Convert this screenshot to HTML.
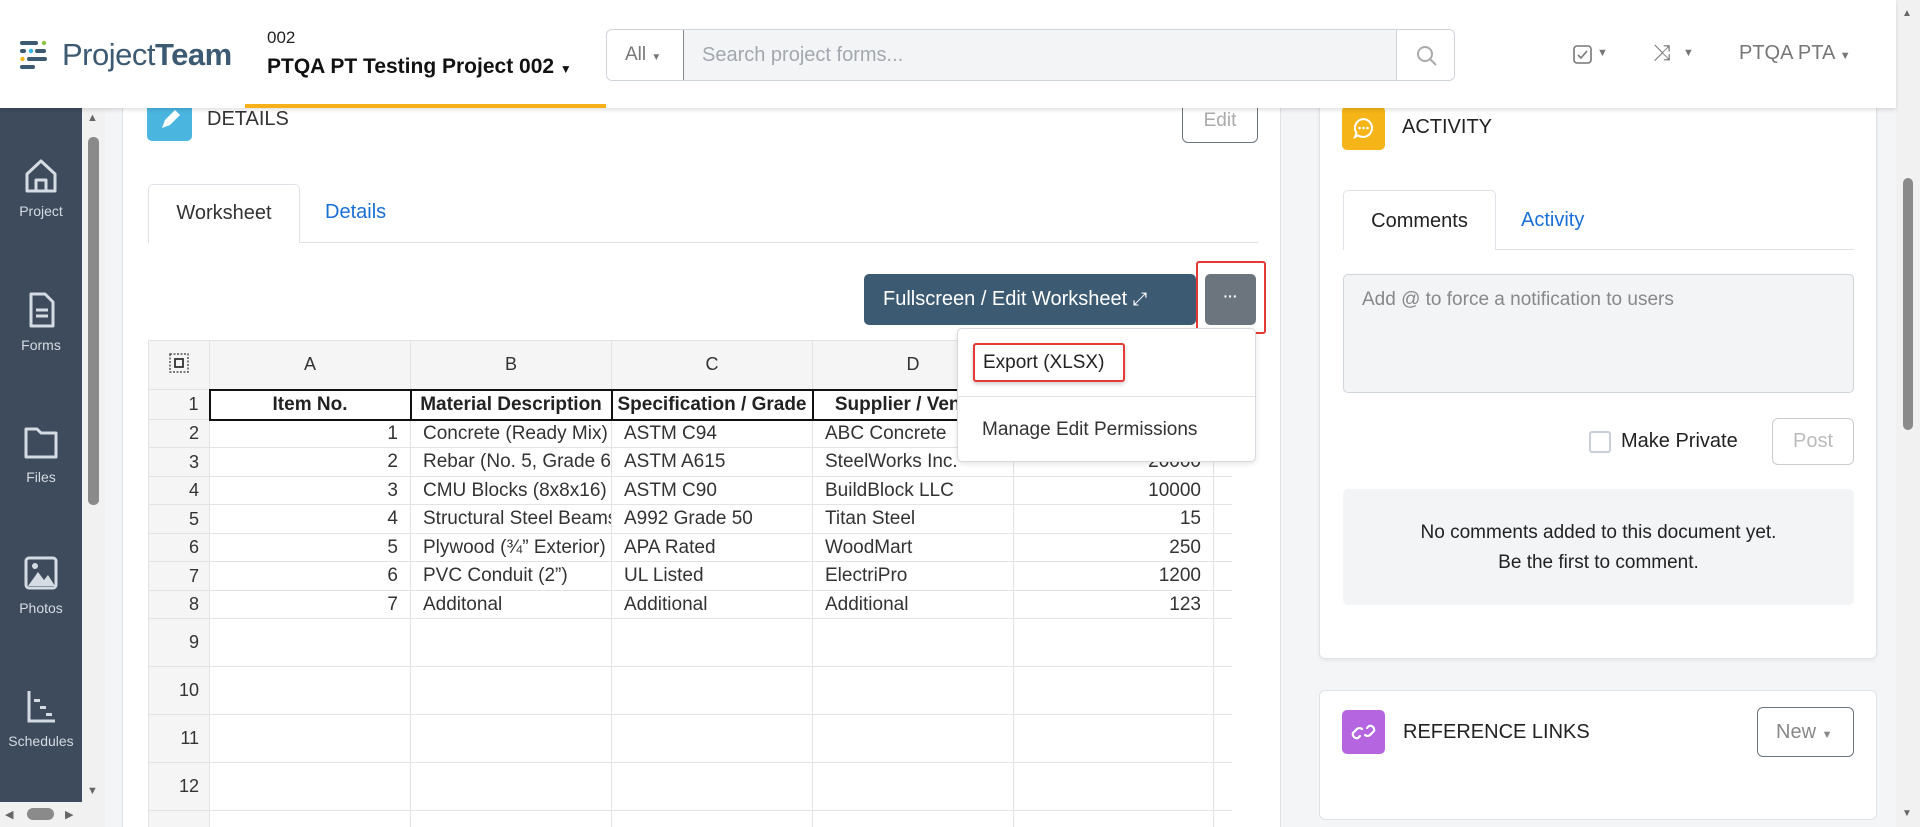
<!DOCTYPE html>
<html style="width:1920px;height:827px;overflow:hidden"><head><meta charset="utf-8"><style>
*{box-sizing:border-box;margin:0;padding:0}
body{width:1920px;height:827px;overflow:hidden;position:relative;background:#f4f5f7;font-family:"Liberation Sans",sans-serif;color:#212529}
.a{position:absolute}
.hdr{left:0;top:0;width:1896px;height:108px;background:#fff;box-shadow:0 2px 4px rgba(0,0,0,.12);z-index:5}
.side{left:0;top:108px;width:82px;height:694px;background:#3d4b5c}
.si{position:absolute;left:0;width:82px;text-align:center;color:#d5dbe2;font-size:14px}
.card{background:#fff;border:1px solid #dfe2e6;border-radius:6px}
table{border-collapse:collapse;table-layout:fixed}
td{border:1px solid #e3e3e3;font-size:19px;padding:0 12px;white-space:nowrap;overflow:hidden;color:#333}
.hd td{background:#f5f5f5;text-align:center;color:#333;font-size:18px}
td.rh{background:#f5f5f5;text-align:right;padding-right:10px;font-size:18px;border-color:#e3e3e3}
.r1 td.c{border:2px solid #111;font-weight:bold;text-align:center;padding:0 2px;color:#222}
td.n{text-align:right}
</style></head><body>
<div class="a hdr">
  <svg class="a" style="left:20px;top:40px" width="34" height="30" viewBox="0 0 34 30">
    <rect x="0" y="1" width="18" height="4" rx="2" fill="#3d5a73"/><circle cx="24" cy="3" r="2.2" fill="#8dc63f"/>
    <rect x="0" y="9" width="6" height="4" rx="2" fill="#3d5a73"/><circle cx="11" cy="11" r="2.2" fill="#29b6e8"/><rect x="15" y="9" width="11" height="4" rx="2" fill="#3d5a73"/>
    <circle cx="2.5" cy="19" r="2.2" fill="#f5b417"/><rect x="7" y="17" width="20" height="4" rx="2" fill="#3d5a73"/>
    <rect x="0" y="25" width="15" height="4" rx="2" fill="#3d5a73"/>
  </svg>
  <div class="a" style="left:62px;top:37px;font-size:31px;color:#3d5a73;letter-spacing:-0.5px">Project<b style="font-weight:bold">Team</b></div>
  <div class="a" style="left:267px;top:28px;font-size:17px;color:#222">002</div>
  <div class="a" style="left:267px;top:55px;font-size:21px;font-weight:bold;color:#111">PTQA PT Testing Project 002 <span style="font-size:12px">▼</span></div>
  <div class="a" style="left:245px;top:104px;width:361px;height:4px;background:#f6b01a"></div>
  <div class="a" style="left:606px;top:29px;width:849px;height:52px;border:1px solid #cfd4da;border-radius:6px;background:#f3f4f6;overflow:hidden">
    <div class="a" style="left:0;top:0;width:77px;height:50px;background:#fff;border-right:1px solid #888;color:#777;font-size:19px;line-height:50px;padding-left:18px">All <span style="font-size:10px">▼</span></div>
    <div class="a" style="left:95px;top:0;line-height:50px;font-size:20px;color:#a3a8ae">Search project forms...</div>
    <div class="a" style="left:789px;top:0;width:59px;height:50px;background:#fff;border-left:1px solid #cfd4da"><svg style="position:absolute;left:19px;top:15px" width="22" height="22" viewBox="0 0 22 22"><circle cx="9" cy="9" r="7" fill="none" stroke="#aaa" stroke-width="2"/><path d="M14 14l6 6" stroke="#aaa" stroke-width="2"/></svg></div>
  </div>
  <svg class="a" style="left:1573px;top:45px" width="20" height="20" viewBox="0 0 20 20"><rect x="1" y="1" width="17" height="17" rx="3" fill="none" stroke="#777" stroke-width="1.6"/><path d="M5 10l3 3 6-7" fill="none" stroke="#777" stroke-width="1.6"/></svg>
  <div class="a" style="left:1597px;top:47px;font-size:11px;color:#777">▼</div>
  <div class="a" style="left:1653px;top:40px;font-size:22px;color:#777">⤨</div>
  <div class="a" style="left:1683px;top:47px;font-size:11px;color:#777">▼</div>
  <div class="a" style="left:1739px;top:42px;font-size:20px;color:#777">PTQA PTA <span style="font-size:11px">▼</span></div>
</div>
<div class="a" style="left:1896px;top:0;width:24px;height:827px;background:#f1f1f1"></div>
<div class="a" style="left:1903px;top:178px;width:10px;height:252px;background:#8a8a8a;border-radius:5px"></div>
<div class="a" style="left:1902px;top:8px;font-size:10px;color:#666">▲</div>
<div class="a" style="left:1902px;top:808px;font-size:10px;color:#666">▼</div>

<div class="a side">
 <div class="si" style="top:48px"><svg width="40" height="40" viewBox="0 0 40 40"><path d="M6 18L20 5l14 13v17H6z M15 35V24h10v11" fill="none" stroke="#d5dbe2" stroke-width="3" stroke-linejoin="round"/></svg><div style="margin-top:4px">Project</div></div>
 <div class="si" style="top:182px"><svg width="40" height="40" viewBox="0 0 40 40"><path d="M10 4h14l8 8v24H10z M15 20h12 M15 26h12" fill="none" stroke="#d5dbe2" stroke-width="3" stroke-linejoin="round"/></svg><div style="margin-top:4px">Forms</div></div>
 <div class="si" style="top:314px"><svg width="40" height="40" viewBox="0 0 40 40"><path d="M5 7h11l4 4h15v24H5z" fill="none" stroke="#d5dbe2" stroke-width="3" stroke-linejoin="round"/></svg><div style="margin-top:4px">Files</div></div>
 <div class="si" style="top:445px"><svg width="40" height="40" viewBox="0 0 40 40"><rect x="5" y="5" width="30" height="30" rx="3" fill="none" stroke="#d5dbe2" stroke-width="3"/><path d="M7 33l10-14 6 8 4-5 7 11z" fill="#d5dbe2"/><circle cx="14" cy="13" r="3" fill="#d5dbe2"/></svg><div style="margin-top:4px">Photos</div></div>
 <div class="si" style="top:578px"><svg width="40" height="40" viewBox="0 0 40 40"><path d="M8 5v30h26" fill="none" stroke="#d5dbe2" stroke-width="3"/><rect x="13" y="13" width="6" height="3" fill="#d5dbe2"/><rect x="19" y="20" width="6" height="3" fill="#d5dbe2"/><rect x="25" y="27" width="6" height="3" fill="#d5dbe2"/></svg><div style="margin-top:4px">Schedules</div></div>
</div>
<div class="a" style="left:82px;top:108px;width:23px;height:694px;background:#f1f1f1"></div>
<div class="a" style="left:87px;top:112px;font-size:11px;color:#666">▲</div>
<div class="a" style="left:88px;top:137px;width:11px;height:368px;background:#8a8a8a;border-radius:5px"></div>
<div class="a" style="left:87px;top:785px;font-size:11px;color:#666">▼</div>
<div class="a" style="left:0;top:802px;width:105px;height:25px;background:#f1f1f1"></div>
<div class="a" style="left:5px;top:808px;font-size:11px;color:#666">◀</div>
<div class="a" style="left:27px;top:808px;width:27px;height:12px;background:#8a8a8a;border-radius:6px"></div>
<div class="a" style="left:65px;top:808px;font-size:11px;color:#666">▶</div>

<div class="a" style="left:122px;top:60px;width:1159px;height:767px;background:#fff;border:1px solid #dfe2e6;border-bottom:none"></div>
<div class="a" style="left:147px;top:98px;width:45px;height:43px;background:#4ab6e0;border-radius:5px"><svg width="45" height="43" viewBox="0 0 45 43"><path d="M15 30l3-8 10-10 5 5-10 10z" fill="#fff"/></svg></div>
<div class="a" style="left:207px;top:108px;font-size:20px;color:#333">DETAILS</div>
<div class="a" style="left:1182px;top:100px;width:76px;height:43px;border:1px solid #6c757d;border-radius:6px;color:#aaa;font-size:19px;text-align:center;line-height:40px">Edit</div>
<div class="a" style="left:148px;top:242px;width:1110px;height:1px;background:#dee2e6"></div>
<div class="a" style="left:148px;top:184px;width:152px;height:59px;background:#fff;border:1px solid #dee2e6;border-bottom:none;border-radius:5px 5px 0 0;font-size:20px;text-align:center;line-height:56px;color:#333">Worksheet</div>
<div class="a" style="left:325px;top:201px;font-size:20px;color:#1a6fd6">Details</div>

<div class="a" style="left:864px;top:274px;width:332px;height:51px;background:#3d5a73;border-radius:5px;color:#fff;font-size:20px;line-height:51px;padding-left:19px">Fullscreen / Edit Worksheet <span style="font-size:18px">⤢</span></div>
<div class="a" style="left:1205px;top:274px;width:51px;height:51px;background:#6c757d;border-radius:5px;color:#fff;font-size:14px;text-align:center;line-height:44px;font-weight:bold">···</div>
<div class="a" style="left:1196px;top:261px;width:70px;height:73px;border:2px solid #e53935;border-radius:3px"></div>

<div class="a" style="left:148px;top:340px;width:1084px;height:487px;overflow:hidden">
<table style="width:1084px">
<colgroup><col style="width:61px"><col style="width:201px"><col style="width:201px"><col style="width:201px"><col style="width:201px"><col style="width:200px"><col style="width:19px"></colgroup>
<tr class="hd" style="height:49px"><td><svg width="20" height="20" viewBox="0 0 20 20"><rect x="1" y="1" width="18" height="18" fill="none" stroke="#555" stroke-width="1.5" stroke-dasharray="2 1.5"/><rect x="6" y="6" width="8" height="8" fill="none" stroke="#333" stroke-width="1.8"/></svg></td><td>A</td><td>B</td><td>C</td><td>D</td><td></td><td></td></tr>
<tr class="r1" style="height:30px"><td class="rh">1</td><td class="c">Item No.</td><td class="c">Material Description</td><td class="c">Specification / Grade</td><td class="c">Supplier / Vendor</td><td></td><td></td></tr>
<tr style="height:28px"><td class="rh">2</td><td class="n">1</td><td>Concrete (Ready Mix)</td><td>ASTM C94</td><td>ABC Concrete</td><td class="n"></td><td></td></tr>
<tr style="height:29px"><td class="rh">3</td><td class="n">2</td><td>Rebar (No. 5, Grade 60)</td><td>ASTM A615</td><td>SteelWorks Inc.</td><td class="n">20000</td><td></td></tr>
<tr style="height:28px"><td class="rh">4</td><td class="n">3</td><td>CMU Blocks (8x8x16)</td><td>ASTM C90</td><td>BuildBlock LLC</td><td class="n">10000</td><td></td></tr>
<tr style="height:29px"><td class="rh">5</td><td class="n">4</td><td>Structural Steel Beams</td><td>A992 Grade 50</td><td>Titan Steel</td><td class="n">15</td><td></td></tr>
<tr style="height:28px"><td class="rh">6</td><td class="n">5</td><td>Plywood (¾” Exterior)</td><td>APA Rated</td><td>WoodMart</td><td class="n">250</td><td></td></tr>
<tr style="height:29px"><td class="rh">7</td><td class="n">6</td><td>PVC Conduit (2”)</td><td>UL Listed</td><td>ElectriPro</td><td class="n">1200</td><td></td></tr>
<tr style="height:28px"><td class="rh">8</td><td class="n">7</td><td>Additonal</td><td>Additional</td><td>Additional</td><td class="n">123</td><td></td></tr>
<tr style="height:48px"><td class="rh">9</td><td></td><td></td><td></td><td></td><td></td><td></td></tr>
<tr style="height:48px"><td class="rh">10</td><td></td><td></td><td></td><td></td><td></td><td></td></tr>
<tr style="height:48px"><td class="rh">11</td><td></td><td></td><td></td><td></td><td></td><td></td></tr>
<tr style="height:48px"><td class="rh">12</td><td></td><td></td><td></td><td></td><td></td><td></td></tr>
<tr style="height:48px"><td class="rh"></td><td></td><td></td><td></td><td></td><td></td><td></td></tr>
</table>
</div>

<div class="a" style="left:957px;top:328px;width:299px;height:134px;background:#fff;border:1px solid #d6d9dd;border-radius:5px;box-shadow:0 2px 6px rgba(0,0,0,.1)">
  <div class="a" style="left:0;top:67px;width:297px;height:1px;background:#e3e3e3"></div>
  <div class="a" style="left:24px;top:90px;font-size:19px;color:#333">Manage Edit Permissions</div>
</div>
<div class="a" style="left:973px;top:343px;width:152px;height:39px;border:2px solid #e53935;border-radius:3px;box-shadow:0 2px 4px rgba(0,0,0,.2);background:#fff;font-size:19px;line-height:35px;padding-left:8px;color:#222">Export (XLSX)</div>

<div class="a card" style="left:1319px;top:60px;width:558px;height:599px;box-shadow:0 2px 4px rgba(0,0,0,.06)"></div>
<div class="a" style="left:1342px;top:106px;width:43px;height:44px;background:#f5b417;border-radius:5px"><svg width="43" height="44" viewBox="0 0 43 44"><path d="M21 13a9 9 0 1 1-5 16.5L13 31l1.5-4A9 9 0 0 1 21 13z" fill="none" stroke="#fff" stroke-width="2"/><circle cx="17.5" cy="22" r="1.3" fill="#fff"/><circle cx="21.5" cy="22" r="1.3" fill="#fff"/><circle cx="25.5" cy="22" r="1.3" fill="#fff"/></svg></div>
<div class="a" style="left:1402px;top:116px;font-size:20px;color:#222">ACTIVITY</div>
<div class="a" style="left:1343px;top:249px;width:511px;height:1px;background:#dee2e6"></div>
<div class="a" style="left:1343px;top:190px;width:153px;height:60px;background:#fff;border:1px solid #dee2e6;border-bottom:none;border-radius:5px 5px 0 0;font-size:20px;text-align:center;line-height:60px;color:#222">Comments</div>
<div class="a" style="left:1521px;top:209px;font-size:20px;color:#1a6fd6">Activity</div>
<div class="a" style="left:1343px;top:274px;width:511px;height:119px;background:#f3f4f6;border:1px solid #cfd4da;border-radius:5px;padding:14px 18px;font-size:19px;color:#888">Add @ to force a notification to users</div>
<div class="a" style="left:1589px;top:431px;width:22px;height:22px;border:2px solid #c8cfd8;border-radius:3px;background:#fff"></div>
<div class="a" style="left:1621px;top:430px;font-size:20px;color:#222">Make Private</div>
<div class="a" style="left:1772px;top:418px;width:82px;height:47px;border:1px solid #ccc;border-radius:6px;color:#bbb;font-size:20px;text-align:center;line-height:45px">Post</div>
<div class="a" style="left:1343px;top:489px;width:511px;height:116px;background:#f3f4f6;border-radius:5px;text-align:center;font-size:19px;line-height:30px;padding-top:29px;color:#222">No comments added to this document yet.<br>Be the first to comment.</div>

<div class="a card" style="left:1319px;top:690px;width:558px;height:130px"></div>
<div class="a" style="left:1342px;top:710px;width:43px;height:44px;background:#b565e0;border-radius:5px"><svg width="43" height="44" viewBox="0 0 43 44"><path d="M18 26l-2 2a4 4 0 0 1-5-5l4-4a4 4 0 0 1 5 0 M25 18l2-2a4 4 0 0 1 5 5l-4 4a4 4 0 0 1-5 0" fill="none" stroke="#fff" stroke-width="2.2" stroke-linecap="round"/></svg></div>
<div class="a" style="left:1403px;top:721px;font-size:20px;color:#222">REFERENCE LINKS</div>
<div class="a" style="left:1757px;top:707px;width:97px;height:50px;border:1px solid #6c757d;border-radius:6px;color:#888;font-size:20px;line-height:48px;padding-left:18px">New <span style="font-size:11px">▼</span></div>
</body></html>
